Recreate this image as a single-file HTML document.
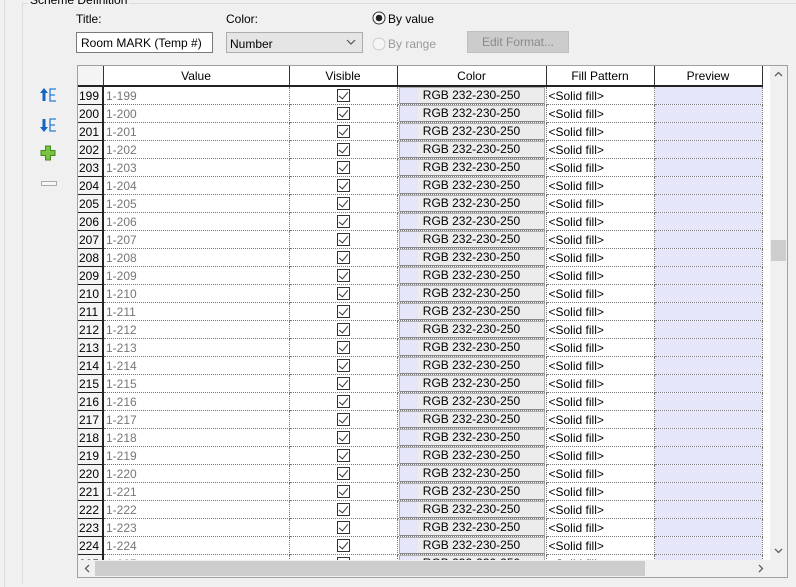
<!DOCTYPE html>
<html><head><meta charset="utf-8"><style>
*{box-sizing:border-box;margin:0;padding:0}
body{width:796px;height:587px;background:#f0f0f0;font-family:"Liberation Sans",sans-serif;font-size:12px;color:#000;position:relative;overflow:hidden}
.a{position:absolute}
.grid{position:absolute;left:77px;top:65px;width:711px;height:513px;border:1px solid #a0a0a0;background:#fff;overflow:hidden}
table{border-collapse:collapse;table-layout:fixed;position:absolute;left:0;top:0}
td,th{height:18px;font-weight:normal;white-space:nowrap;overflow:hidden;padding:0;font-size:12px}
th{height:20px;border-right:1px solid #333;border-bottom:2px solid #222;text-align:center;background:#fff}
td{border-right:1px dotted #777;border-bottom:1px dotted #777}
td.h{border-right:2px solid #222;border-bottom:1px solid #222;padding-left:1px;background:#f4f4f4}
td.v{color:#777;padding-left:2px}
td.c{text-align:center}
.cb{display:inline-block;width:13px;height:13px;border:1px solid #333;vertical-align:middle;position:relative;top:-1px}
.cb:after{content:"";position:absolute;left:3px;top:0px;width:4px;height:8px;border-right:1.3px solid #333;border-bottom:1.3px solid #333;transform:rotate(40deg)}
td.col{padding:0}
.btn{height:17px;margin:0 1px;border:1px solid #adadad;border-bottom-color:#888;background:linear-gradient(90deg,#e6e6fa 0 18px,#ececec 18px);text-align:center;line-height:15px}
td.f{padding-left:2px}
td.p{background:#e6e6fa}
</style></head><body>
<div class="a" style="left:4px;top:0;width:1px;height:587px;background:#dcdcdc"></div>
<div class="a" style="left:22px;top:4px;width:1px;height:580px;background:#dcdcdc"></div>
<div class="a" style="left:22px;top:3px;width:774px;height:1px;background:#dcdcdc"></div>
<div class="a" style="left:28px;top:-7px;background:#f0f0f0;padding:0 2px">Scheme Definition</div>
<div class="a" style="left:76px;top:12px">Title:</div>
<div class="a" style="left:76px;top:32px;width:137px;height:21px;border:1px solid #7a7a7a;background:#fff;padding:3px 4px">Room MARK (Temp #)</div>
<div class="a" style="left:226px;top:12px">Color:</div>
<div class="a" style="left:226px;top:32px;width:137px;height:21px;border:1px solid #adadad;background:#e5e5e5;padding:4px 3px">Number</div>
<svg class="a" style="left:346px;top:38px" width="10" height="8"><path d="M1 2 L5 6 L9 2" fill="none" stroke="#555" stroke-width="1.2"/></svg>
<svg class="a" style="left:372px;top:11px" width="14" height="14"><circle cx="7" cy="7" r="6" fill="#fff" stroke="#333"/><circle cx="7" cy="7" r="3.3" fill="#222"/></svg>
<div class="a" style="left:388px;top:12px">By value</div>
<svg class="a" style="left:372px;top:37px" width="14" height="14"><circle cx="7" cy="7" r="6" fill="#f5f5f5" stroke="#ccc"/></svg>
<div class="a" style="left:388px;top:37px;color:#9a9a9a">By range</div>
<div class="a" style="left:467px;top:31px;width:102px;height:22px;background:#cccccc;border:1px solid #bfbfbf;color:#8a8a8a;text-align:center;line-height:20px">Edit Format...</div>
<svg class="a" style="left:40px;top:87px" width="18" height="16"><path d="M4 1 L8 6 H5.5 V14 H2.5 V6 H0 Z" fill="#1565c0"/><path d="M16 2 H10 V14 H16 M10 8 H15" fill="none" stroke="#2a7fd4" stroke-width="1.3"/></svg>
<svg class="a" style="left:40px;top:117px" width="18" height="16"><path d="M4 15 L8 10 H5.5 V2 H2.5 V10 H0 Z" fill="#1565c0"/><path d="M16 2 H10 V14 H16 M10 8 H15" fill="none" stroke="#2a7fd4" stroke-width="1.3"/></svg>
<svg class="a" style="left:40px;top:145px" width="16" height="16"><path d="M5.5 1 H10.5 V5.5 H15 V10.5 H10.5 V15 H5.5 V10.5 H1 V5.5 H5.5 Z" fill="#7cc142" stroke="#3f8a1f"/></svg>
<div class="a" style="left:41px;top:181px;width:16px;height:5px;border:1px solid #aaa;background:#f7f7f7"></div>
<div class="grid">
<table>
<colgroup><col style="width:25px"><col style="width:186px"><col style="width:108px"><col style="width:149px"><col style="width:108px"><col style="width:108px"></colgroup>
<tr><th style="background:#f4f4f4"></th><th>Value</th><th>Visible</th><th>Color</th><th>Fill Pattern</th><th>Preview</th></tr>
<tr><td class="h">199</td><td class="v">1-199</td><td class="c"><span class="cb"></span></td><td class="col"><div class="btn">RGB 232-230-250</div></td><td class="f">&lt;Solid fill&gt;</td><td class="p"></td></tr>
<tr><td class="h">200</td><td class="v">1-200</td><td class="c"><span class="cb"></span></td><td class="col"><div class="btn">RGB 232-230-250</div></td><td class="f">&lt;Solid fill&gt;</td><td class="p"></td></tr>
<tr><td class="h">201</td><td class="v">1-201</td><td class="c"><span class="cb"></span></td><td class="col"><div class="btn">RGB 232-230-250</div></td><td class="f">&lt;Solid fill&gt;</td><td class="p"></td></tr>
<tr><td class="h">202</td><td class="v">1-202</td><td class="c"><span class="cb"></span></td><td class="col"><div class="btn">RGB 232-230-250</div></td><td class="f">&lt;Solid fill&gt;</td><td class="p"></td></tr>
<tr><td class="h">203</td><td class="v">1-203</td><td class="c"><span class="cb"></span></td><td class="col"><div class="btn">RGB 232-230-250</div></td><td class="f">&lt;Solid fill&gt;</td><td class="p"></td></tr>
<tr><td class="h">204</td><td class="v">1-204</td><td class="c"><span class="cb"></span></td><td class="col"><div class="btn">RGB 232-230-250</div></td><td class="f">&lt;Solid fill&gt;</td><td class="p"></td></tr>
<tr><td class="h">205</td><td class="v">1-205</td><td class="c"><span class="cb"></span></td><td class="col"><div class="btn">RGB 232-230-250</div></td><td class="f">&lt;Solid fill&gt;</td><td class="p"></td></tr>
<tr><td class="h">206</td><td class="v">1-206</td><td class="c"><span class="cb"></span></td><td class="col"><div class="btn">RGB 232-230-250</div></td><td class="f">&lt;Solid fill&gt;</td><td class="p"></td></tr>
<tr><td class="h">207</td><td class="v">1-207</td><td class="c"><span class="cb"></span></td><td class="col"><div class="btn">RGB 232-230-250</div></td><td class="f">&lt;Solid fill&gt;</td><td class="p"></td></tr>
<tr><td class="h">208</td><td class="v">1-208</td><td class="c"><span class="cb"></span></td><td class="col"><div class="btn">RGB 232-230-250</div></td><td class="f">&lt;Solid fill&gt;</td><td class="p"></td></tr>
<tr><td class="h">209</td><td class="v">1-209</td><td class="c"><span class="cb"></span></td><td class="col"><div class="btn">RGB 232-230-250</div></td><td class="f">&lt;Solid fill&gt;</td><td class="p"></td></tr>
<tr><td class="h">210</td><td class="v">1-210</td><td class="c"><span class="cb"></span></td><td class="col"><div class="btn">RGB 232-230-250</div></td><td class="f">&lt;Solid fill&gt;</td><td class="p"></td></tr>
<tr><td class="h">211</td><td class="v">1-211</td><td class="c"><span class="cb"></span></td><td class="col"><div class="btn">RGB 232-230-250</div></td><td class="f">&lt;Solid fill&gt;</td><td class="p"></td></tr>
<tr><td class="h">212</td><td class="v">1-212</td><td class="c"><span class="cb"></span></td><td class="col"><div class="btn">RGB 232-230-250</div></td><td class="f">&lt;Solid fill&gt;</td><td class="p"></td></tr>
<tr><td class="h">213</td><td class="v">1-213</td><td class="c"><span class="cb"></span></td><td class="col"><div class="btn">RGB 232-230-250</div></td><td class="f">&lt;Solid fill&gt;</td><td class="p"></td></tr>
<tr><td class="h">214</td><td class="v">1-214</td><td class="c"><span class="cb"></span></td><td class="col"><div class="btn">RGB 232-230-250</div></td><td class="f">&lt;Solid fill&gt;</td><td class="p"></td></tr>
<tr><td class="h">215</td><td class="v">1-215</td><td class="c"><span class="cb"></span></td><td class="col"><div class="btn">RGB 232-230-250</div></td><td class="f">&lt;Solid fill&gt;</td><td class="p"></td></tr>
<tr><td class="h">216</td><td class="v">1-216</td><td class="c"><span class="cb"></span></td><td class="col"><div class="btn">RGB 232-230-250</div></td><td class="f">&lt;Solid fill&gt;</td><td class="p"></td></tr>
<tr><td class="h">217</td><td class="v">1-217</td><td class="c"><span class="cb"></span></td><td class="col"><div class="btn">RGB 232-230-250</div></td><td class="f">&lt;Solid fill&gt;</td><td class="p"></td></tr>
<tr><td class="h">218</td><td class="v">1-218</td><td class="c"><span class="cb"></span></td><td class="col"><div class="btn">RGB 232-230-250</div></td><td class="f">&lt;Solid fill&gt;</td><td class="p"></td></tr>
<tr><td class="h">219</td><td class="v">1-219</td><td class="c"><span class="cb"></span></td><td class="col"><div class="btn">RGB 232-230-250</div></td><td class="f">&lt;Solid fill&gt;</td><td class="p"></td></tr>
<tr><td class="h">220</td><td class="v">1-220</td><td class="c"><span class="cb"></span></td><td class="col"><div class="btn">RGB 232-230-250</div></td><td class="f">&lt;Solid fill&gt;</td><td class="p"></td></tr>
<tr><td class="h">221</td><td class="v">1-221</td><td class="c"><span class="cb"></span></td><td class="col"><div class="btn">RGB 232-230-250</div></td><td class="f">&lt;Solid fill&gt;</td><td class="p"></td></tr>
<tr><td class="h">222</td><td class="v">1-222</td><td class="c"><span class="cb"></span></td><td class="col"><div class="btn">RGB 232-230-250</div></td><td class="f">&lt;Solid fill&gt;</td><td class="p"></td></tr>
<tr><td class="h">223</td><td class="v">1-223</td><td class="c"><span class="cb"></span></td><td class="col"><div class="btn">RGB 232-230-250</div></td><td class="f">&lt;Solid fill&gt;</td><td class="p"></td></tr>
<tr><td class="h">224</td><td class="v">1-224</td><td class="c"><span class="cb"></span></td><td class="col"><div class="btn">RGB 232-230-250</div></td><td class="f">&lt;Solid fill&gt;</td><td class="p"></td></tr>
<tr><td class="h">225</td><td class="v">1-225</td><td class="c"><span class="cb"></span></td><td class="col"><div class="btn">RGB 232-230-250</div></td><td class="f">&lt;Solid fill&gt;</td><td class="p"></td></tr>
</table>
<div class="a" style="left:692px;top:0;width:17px;height:494px;background:#f0f0f0"></div>
<svg class="a" style="left:696px;top:5px" width="9" height="6"><path d="M1 5 L4.5 1.5 L8 5" fill="none" stroke="#606060" stroke-width="1.3"/></svg>
<div class="a" style="left:693px;top:174px;width:15px;height:21px;background:#cdcdcd"></div>
<svg class="a" style="left:696px;top:482px" width="9" height="6"><path d="M1 1 L4.5 4.5 L8 1" fill="none" stroke="#606060" stroke-width="1.3"/></svg>
<div class="a" style="left:0;top:494px;width:709px;height:17px;background:#f0f0f0"></div>
<div class="a" style="left:17px;top:495px;width:550px;height:15px;background:#cdcdcd"></div>
<svg class="a" style="left:6px;top:498px" width="6" height="9"><path d="M5 1 L1.5 4.5 L5 8" fill="none" stroke="#606060" stroke-width="1.3"/></svg>
<svg class="a" style="left:680px;top:498px" width="6" height="9"><path d="M1 1 L4.5 4.5 L1 8" fill="none" stroke="#606060" stroke-width="1.3"/></svg>
<div class="a" style="left:692px;top:494px;width:17px;height:17px;background:#f0f0f0"></div>
</div>
</body></html>
